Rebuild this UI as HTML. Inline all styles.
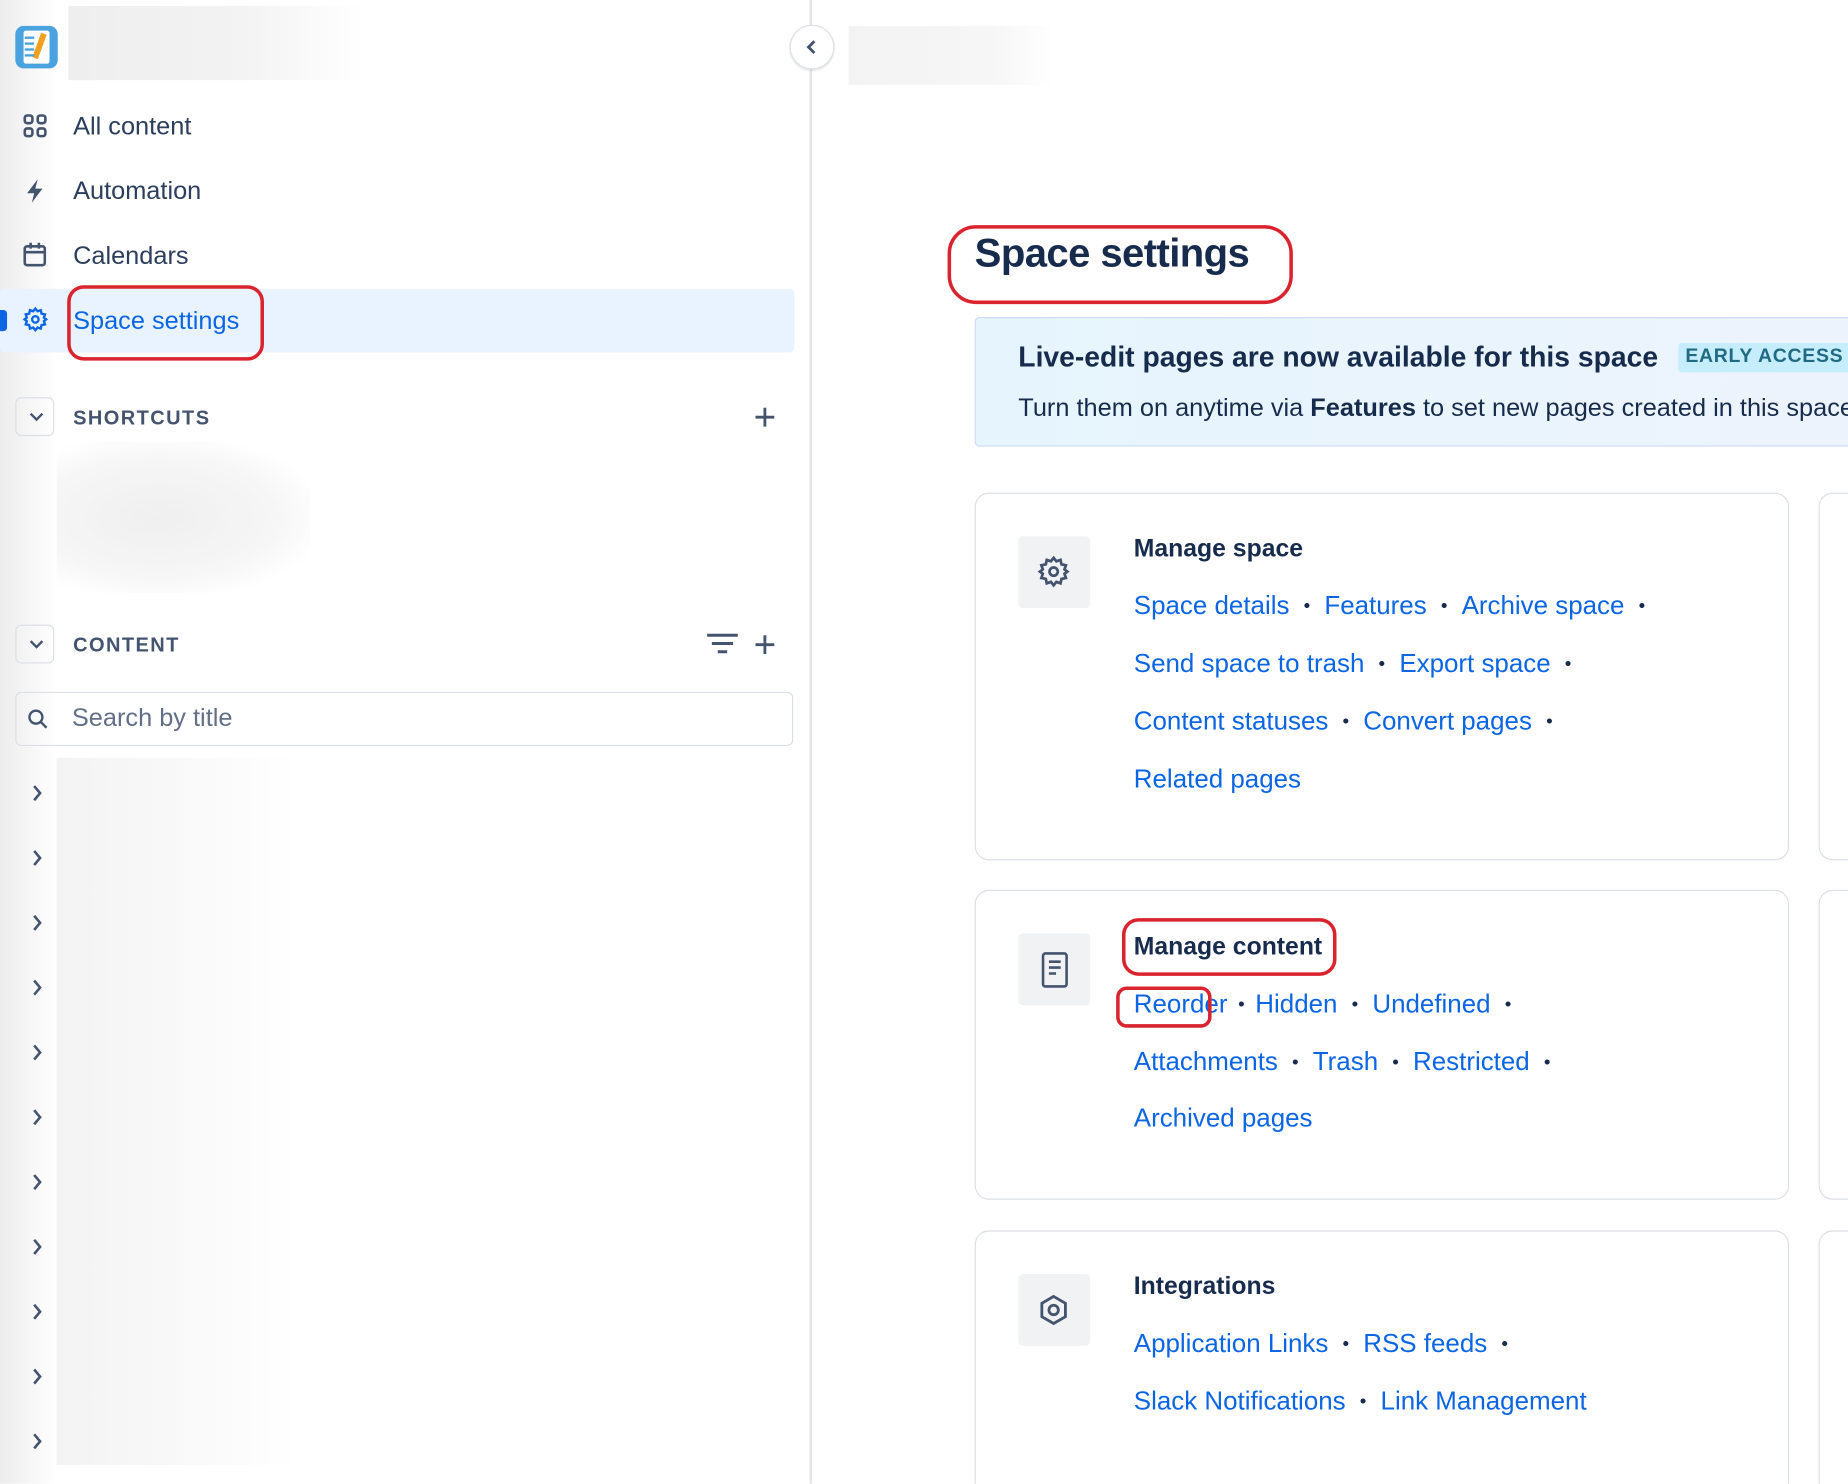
<!DOCTYPE html>
<html><head><meta charset="utf-8"><style>
html,body{margin:0;padding:0;width:1848px;height:1484px;overflow:hidden;background:#fff}
#w{position:absolute;left:0;top:0;width:1568px;height:1259px;overflow:hidden;transform:scale(1.178571);transform-origin:0 0;font-family:"Liberation Sans",sans-serif;color:#172b4d}
.a{position:absolute}
.nav{position:absolute;left:62px;font-size:21.5px;color:#2c3e5d;line-height:24px}
.ic{position:absolute;left:19px}
.sec{position:absolute;left:62px;font-size:17px;font-weight:bold;color:#44546f;letter-spacing:1.2px}
.chbox{position:absolute;left:13px;width:33px;height:33px;border:1px solid #dcdfe4;border-radius:5px;box-sizing:border-box}
.chev{position:absolute;left:25px}
.card{position:absolute;left:827px;width:691px;border:1px solid #dcdfe4;border-radius:12px;box-sizing:border-box}
.card2{position:absolute;left:1543px;width:60px;border:1px solid #dcdfe4;border-radius:12px;box-sizing:border-box}
.ibox{position:absolute;left:864px;width:61px;height:61px;background:#f1f2f4;border-radius:4px}
.h{position:absolute;left:962px;font-size:21px;font-weight:bold;color:#172b4d;line-height:24px}
.l{position:absolute;left:962px;font-size:22px;color:#0c66e4;line-height:24px;white-space:nowrap}
.l b{font-weight:normal;color:#172b4d;margin:0 12px;font-size:16px;position:relative;top:-2px}
.red{position:absolute;border:3px solid #d9232e;box-sizing:border-box}
</style></head><body><div id="w">
<!-- sidebar -->
<div class="a" style="left:0;top:0;width:48px;height:1259px;background:linear-gradient(90deg,#ececec,#fff)"></div>
<div class="a" style="left:687px;top:0;width:2px;height:1259px;background:#e4e5e8"></div>
<div class="a" style="left:58px;top:5px;width:250px;height:63px;background:linear-gradient(90deg,#eeeeee,#f3f3f3 60%,#fff)"></div>
<div class="a" style="left:13px;top:22px;width:36px;height:36px;background:#4aa3df;border-radius:7px"></div>
<div class="a" style="left:20px;top:26px;width:22px;height:28px;background:#fff;border-radius:2px"></div>
<div class="a" style="left:31px;top:28px;width:5px;height:22px;background:#f0a020;transform:rotate(20deg)"></div>
<div class="a" style="left:21px;top:31px;width:8px;height:2px;background:#4aa3df;box-shadow:0 5px #4aa3df,0 10px #4aa3df,0 15px #4aa3df"></div>

<svg class="ic" style="top:96px" width="22" height="22" viewBox="0 0 22 22" fill="none" stroke="#44546f" stroke-width="2.2"><rect x="2" y="2" width="6.5" height="6.5" rx="2"/><rect x="13" y="2" width="6.5" height="6.5" rx="2"/><rect x="2" y="13" width="6.5" height="6.5" rx="2"/><rect x="13" y="13" width="6.5" height="6.5" rx="2"/></svg>
<div class="nav" style="top:95px">All content</div>
<svg class="ic" style="top:151px" width="22" height="22" viewBox="0 0 22 22"><path d="M13 1 L4 13 H10 L8 21 L17 9 H11 Z" fill="#44546f"/></svg>
<div class="nav" style="top:150px">Automation</div>
<svg class="ic" style="top:205px" width="22" height="22" viewBox="0 0 22 22" fill="none" stroke="#44546f" stroke-width="2.2"><rect x="2" y="4" width="17" height="16" rx="2"/><path d="M2 9h17M7 1v5M14 1v5"/></svg>
<div class="nav" style="top:205px">Calendars</div>
<div class="a" style="left:0;top:245px;width:674px;height:54px;background:#e9f2ff;border-radius:4px"></div>
<div class="a" style="left:0;top:263px;width:6px;height:18px;background:#0c66e4;border-radius:0 3px 3px 0"></div>
<svg class="ic" style="top:260px" width="22" height="22" viewBox="0 0 24 24" fill="none" stroke="#0c66e4" stroke-width="2.2"><path d="M12 2l2 2.5 3-1 .7 3.2 3.2.7-1 3L22 12l-2.1 1.6 1 3-3.2.7-.7 3.2-3-1L12 22l-2-2.5-3 1-.7-3.2-3.2-.7 1-3L2 12l2.1-1.6-1-3 3.2-.7.7-3.2 3 1z"/><circle cx="12" cy="12" r="3"/></svg>
<div class="nav" style="top:260px;color:#0c66e4">Space settings</div>
<div class="red" style="left:57px;top:242px;width:167px;height:64px;border-radius:14px"></div>

<div class="chbox" style="top:337px"></div>
<svg class="chev" style="top:348px;left:23px" width="16" height="12" viewBox="0 0 16 12"><path d="M3 3l5 5 5-5" stroke="#44546f" stroke-width="2" fill="none"/></svg>
<div class="sec" style="top:345px">SHORTCUTS</div>
<svg class="a" style="left:639px;top:344px" width="20" height="20" viewBox="0 0 20 20"><path d="M10 2v16M2 10h16" stroke="#44546f" stroke-width="2.4"/></svg>
<div class="a" style="left:48px;top:375px;width:215px;height:128px;background:radial-gradient(ellipse at 40% 50%,#efefef,#f6f6f6 55%,#fff 80%)"></div>

<div class="chbox" style="top:530px"></div>
<svg class="chev" style="top:541px;left:23px" width="16" height="12" viewBox="0 0 16 12"><path d="M3 3l5 5 5-5" stroke="#44546f" stroke-width="2" fill="none"/></svg>
<div class="sec" style="top:538px">CONTENT</div>
<svg class="a" style="left:599px;top:536px" width="28" height="22" viewBox="0 0 28 22"><path d="M1 3h26M5 10h18M10 17h8" stroke="#44546f" stroke-width="2.6"/></svg>
<svg class="a" style="left:639px;top:537px" width="20" height="20" viewBox="0 0 20 20"><path d="M10 2v16M2 10h16" stroke="#44546f" stroke-width="2.4"/></svg>
<div class="a" style="left:13px;top:587px;width:660px;height:46px;border:1px solid #dcdfe4;border-radius:5px;box-sizing:border-box"></div>
<svg class="a" style="left:23px;top:601px" width="18" height="18" viewBox="0 0 18 18" fill="none" stroke="#44546f" stroke-width="2"><circle cx="7.5" cy="7.5" r="5.5"/><path d="M11.5 11.5l5 5"/></svg>
<div class="a" style="left:61px;top:597px;font-size:21.5px;color:#626f86">Search by title</div>
<div class="a" style="left:48px;top:643px;width:230px;height:600px;background:linear-gradient(90deg,#f3f3f3,#f8f8f8 40%,#fff 90%)"></div>
<svg class="a" style="left:24px;top:663px" width="16" height="580" viewBox="0 0 16 580" fill="none" stroke="#44546f" stroke-width="2.2">
<path d="M5 4l5 6-5 6"/><path d="M5 59l5 6-5 6"/><path d="M5 114l5 6-5 6"/><path d="M5 169l5 6-5 6"/><path d="M5 224l5 6-5 6"/><path d="M5 279l5 6-5 6"/><path d="M5 334l5 6-5 6"/><path d="M5 389l5 6-5 6"/><path d="M5 444l5 6-5 6"/><path d="M5 499l5 6-5 6"/><path d="M5 554l5 6-5 6"/></svg>
<div class="a" style="left:670px;top:21px;width:38px;height:38px;border-radius:50%;background:#fff;border:1px solid #dcdfe4;box-sizing:border-box;box-shadow:0 1px 2px rgba(0,0,0,.12)"></div>
<svg class="a" style="left:682px;top:32px" width="14" height="16" viewBox="0 0 14 16"><path d="M9 3l-5 5 5 5" stroke="#44546f" stroke-width="2.4" fill="none"/></svg>

<!-- main -->
<div class="a" style="left:720px;top:22px;width:175px;height:50px;background:linear-gradient(90deg,#f3f3f3,#f6f6f6 70%,#fff)"></div>
<div class="a" style="left:827px;top:196px;font-size:34px;font-weight:600;color:#172b4d;letter-spacing:-.5px">Space settings</div>
<div class="red" style="left:804px;top:191px;width:293px;height:67px;border-radius:24px"></div>
<div class="a" style="left:827px;top:269px;width:760px;height:110px;background:linear-gradient(90deg,#e6f5fd,#edf3fd);border:1px solid #cfd9f7;border-radius:4px;box-sizing:border-box"></div>
<div class="a" style="left:864px;top:290px;font-size:24px;font-weight:bold;color:#172b4d;white-space:nowrap">Live-edit pages are now available for this space</div>
<div class="a" style="left:1424px;top:291px;width:150px;height:25px;background:#c6edfb;border-radius:3px"></div>
<div class="a" style="left:1430px;top:293px;font-size:16.5px;font-weight:bold;color:#206a83;letter-spacing:.6px;white-space:nowrap">EARLY ACCESS</div>
<div class="a" style="left:864px;top:334px;font-size:21.5px;color:#172b4d;white-space:nowrap">Turn them on anytime via <b>Features</b> to set new pages created in this space</div>

<div class="card" style="top:418px;height:312px"></div><div class="card2" style="top:418px;height:312px"></div>
<div class="ibox" style="top:455px"></div>
<svg class="a" style="left:880px;top:471px" width="28" height="28" viewBox="0 0 24 24" fill="none" stroke="#44546f" stroke-width="2"><path d="M12 2l2 2.5 3-1 .7 3.2 3.2.7-1 3L22 12l-2.1 1.6 1 3-3.2.7-.7 3.2-3-1L12 22l-2-2.5-3 1-.7-3.2-3.2-.7 1-3L2 12l2.1-1.6-1-3 3.2-.7.7-3.2 3 1z"/><circle cx="12" cy="12" r="3"/></svg>
<div class="h" style="top:454px">Manage space</div>
<div class="l" style="top:502px">Space details<b>•</b>Features<b>•</b>Archive space<b>•</b></div>
<div class="l" style="top:551px">Send space to trash<b>•</b>Export space<b>•</b></div>
<div class="l" style="top:600px">Content statuses<b>•</b>Convert pages<b>•</b></div>
<div class="l" style="top:649px">Related pages</div>

<div class="card" style="top:755px;height:263px"></div><div class="card2" style="top:755px;height:263px"></div>
<div class="ibox" style="top:792px"></div>
<svg class="a" style="left:883px;top:807px" width="24" height="32" viewBox="0 0 24 32" fill="none" stroke="#44546f" stroke-width="2.2"><rect x="2" y="2" width="20" height="28" rx="2"/><path d="M7 9h10M7 14h10M7 19h6"/></svg>
<div class="h" style="top:792px">Manage content</div>
<div class="red" style="left:952px;top:779px;width:182px;height:49px;border-radius:14px"></div>
<div class="l" style="top:840px">Reorder<b style="margin:0 9px">•</b>Hidden<b>•</b>Undefined<b>•</b></div>
<div class="red" style="left:947px;top:837px;width:81px;height:35px;border-radius:9px"></div>
<div class="l" style="top:889px">Attachments<b>•</b>Trash<b>•</b>Restricted<b>•</b></div>
<div class="l" style="top:937px">Archived pages</div>

<div class="card" style="top:1044px;height:240px"></div><div class="card2" style="top:1044px;height:240px"></div>
<div class="ibox" style="top:1081px"></div>
<svg class="a" style="left:880px;top:1097px" width="28" height="28" viewBox="0 0 28 28" fill="none" stroke="#44546f" stroke-width="2.4"><path d="M14 3l10 5.8v11.4L14 26 4 20.2V8.8z"/><circle cx="14" cy="14.5" r="4"/></svg>
<div class="h" style="top:1080px">Integrations</div>
<div class="l" style="top:1128px">Application Links<b>•</b>RSS feeds<b>•</b></div>
<div class="l" style="top:1177px">Slack Notifications<b>•</b>Link Management</div>
</div></body></html>
